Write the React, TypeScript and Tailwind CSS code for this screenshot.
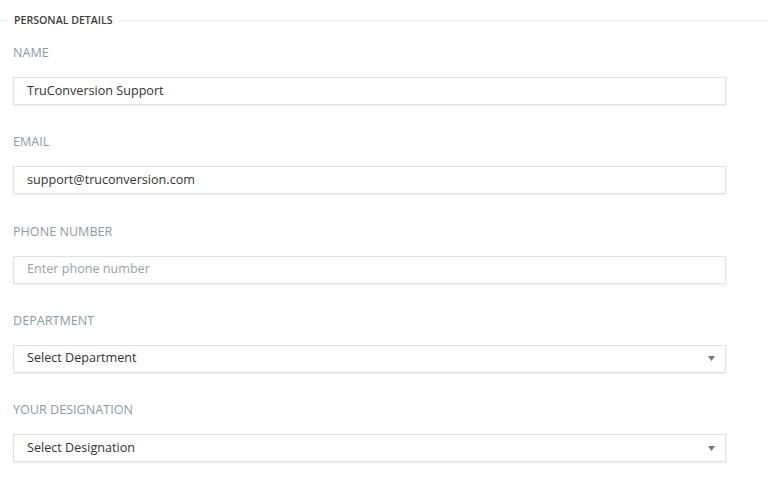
import React from "react";

type Field = {
  label: string;
  value?: string;
  placeholder?: string;
  select?: boolean;
};

const fields: Field[] = [
  { label: "NAME", value: "TruConversion Support" },
  { label: "EMAIL", value: "support@truconversion.com" },
  { label: "PHONE NUMBER", placeholder: "Enter phone number" },
  { label: "DEPARTMENT", value: "Select Department", select: true },
  { label: "YOUR DESIGNATION", value: "Select Designation", select: true },
];

function Caret() {
  return (
    <svg width="7" height="5" viewBox="0 0 7 5" className="shrink-0">
      <path d="M0 0H7L3.5 5Z" fill="#7a7a7a" />
    </svg>
  );
}

export default function App() {
  return (
    <div
      className="w-full min-h-[481px] bg-white pt-[13px]"
      style={{ fontFamily: '"Open Sans", "Liberation Sans", sans-serif' }}
    >
      {/* Section heading */}
      <div className="flex items-center h-[14px]">
        <div className="w-[9px] h-px bg-[#eceff1]"></div>
        <span className="px-[5px] text-[10.6px] font-semibold text-[#3c3c3c] leading-[14px]">
          PERSONAL DETAILS
        </span>
        <div className="flex-1 h-px bg-[#eceff1]"></div>
      </div>

      <div className="pt-[17px] px-[13px]">
        {fields.map((f) => (
          <div key={f.label} className="w-[713px] mb-[28.3px]">
            <div className="text-[12.6px] leading-[17px] text-[#8d9ba6] mb-[16px]">
              {f.label}
            </div>
            <div className="h-[28px] flex items-center justify-between border border-[#dfe3e6] bg-white pl-[13px] pr-[10px] shadow-[0_1px_2px_rgba(0,0,0,0.07)]">
              {f.value ? (
                <span className="text-[12.6px] text-[#333]">{f.value}</span>
              ) : (
                <span className="text-[12.6px] text-[#9aa1a7]">{f.placeholder}</span>
              )}
              {f.select && <Caret />}
            </div>
          </div>
        ))}
      </div>
    </div>
  );
}
